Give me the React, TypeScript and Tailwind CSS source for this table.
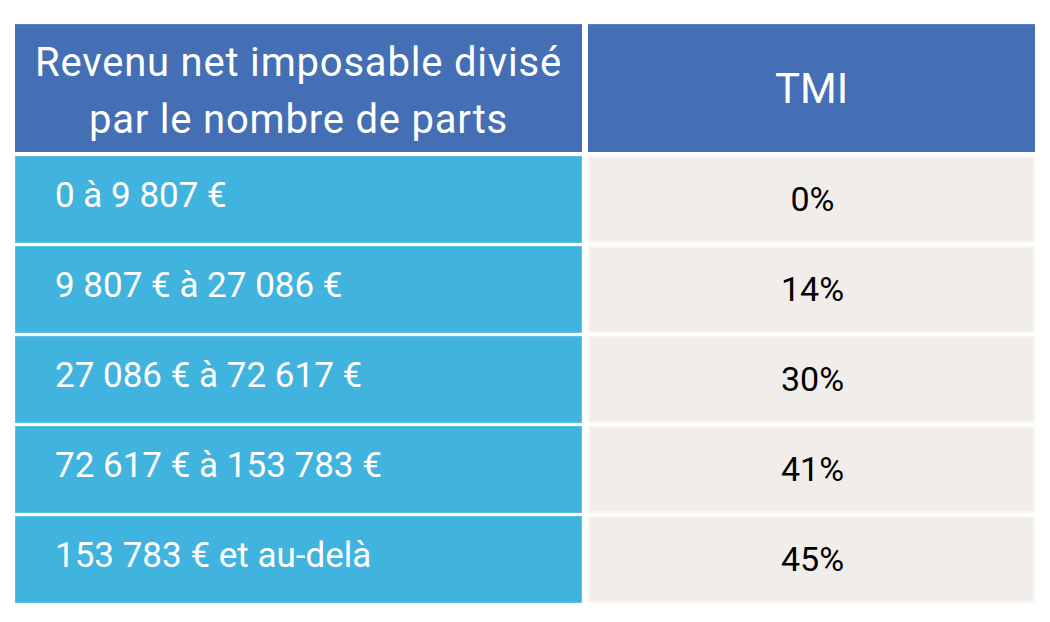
const rows = [
  { range: "0 à 9 807 €", rate: "0%" },
  { range: "9 807 € à 27 086 €", rate: "14%" },
  { range: "27 086 € à 72 617 €", rate: "30%" },
  { range: "72 617 € à 153 783 €", rate: "41%" },
  { range: "153 783 € et au-delà", rate: "45%" },
];

export default function App() {
  return (
    <div
      className="w-[1050px] h-[622px] bg-white pt-[24px] pl-[15px]"
      style={{ fontFamily: "Roboto, 'Liberation Sans', sans-serif" }}
    >
      <div className="grid grid-cols-[567px_447px] gap-x-[6px] gap-y-[3px]">
        {/* Header */}
        <div className="h-[128px] mb-[1px] bg-[#446fb4] border-t border-[#5a80c0] flex items-center justify-center text-center text-white text-[40px] tracking-[0.8px] leading-[57px] pt-[4px]">
          <div>
            Revenu net imposable divisé
            <br />
            par le nombre de parts
          </div>
        </div>
        <div className="h-[128px] mb-[1px] bg-[#446fb4] border-t border-[#5a80c0] flex items-center justify-center text-white text-[42px]">
          TMI
        </div>

        {rows.map((r) => (
          <div key={r.range} className="contents">
            <div className="h-[87px] bg-[#41b3df] border border-[#5cc0e6] flex items-center pl-[39px] pb-[6px] text-white text-[35px]">
              {r.range}
            </div>
            <div className="h-[87px] bg-[#f1edea] border-2 border-[#f8f6f3] flex items-center justify-center text-black text-[34px] pl-[2px]">
              {r.rate}
            </div>
          </div>
        ))}
      </div>
    </div>
  );
}
